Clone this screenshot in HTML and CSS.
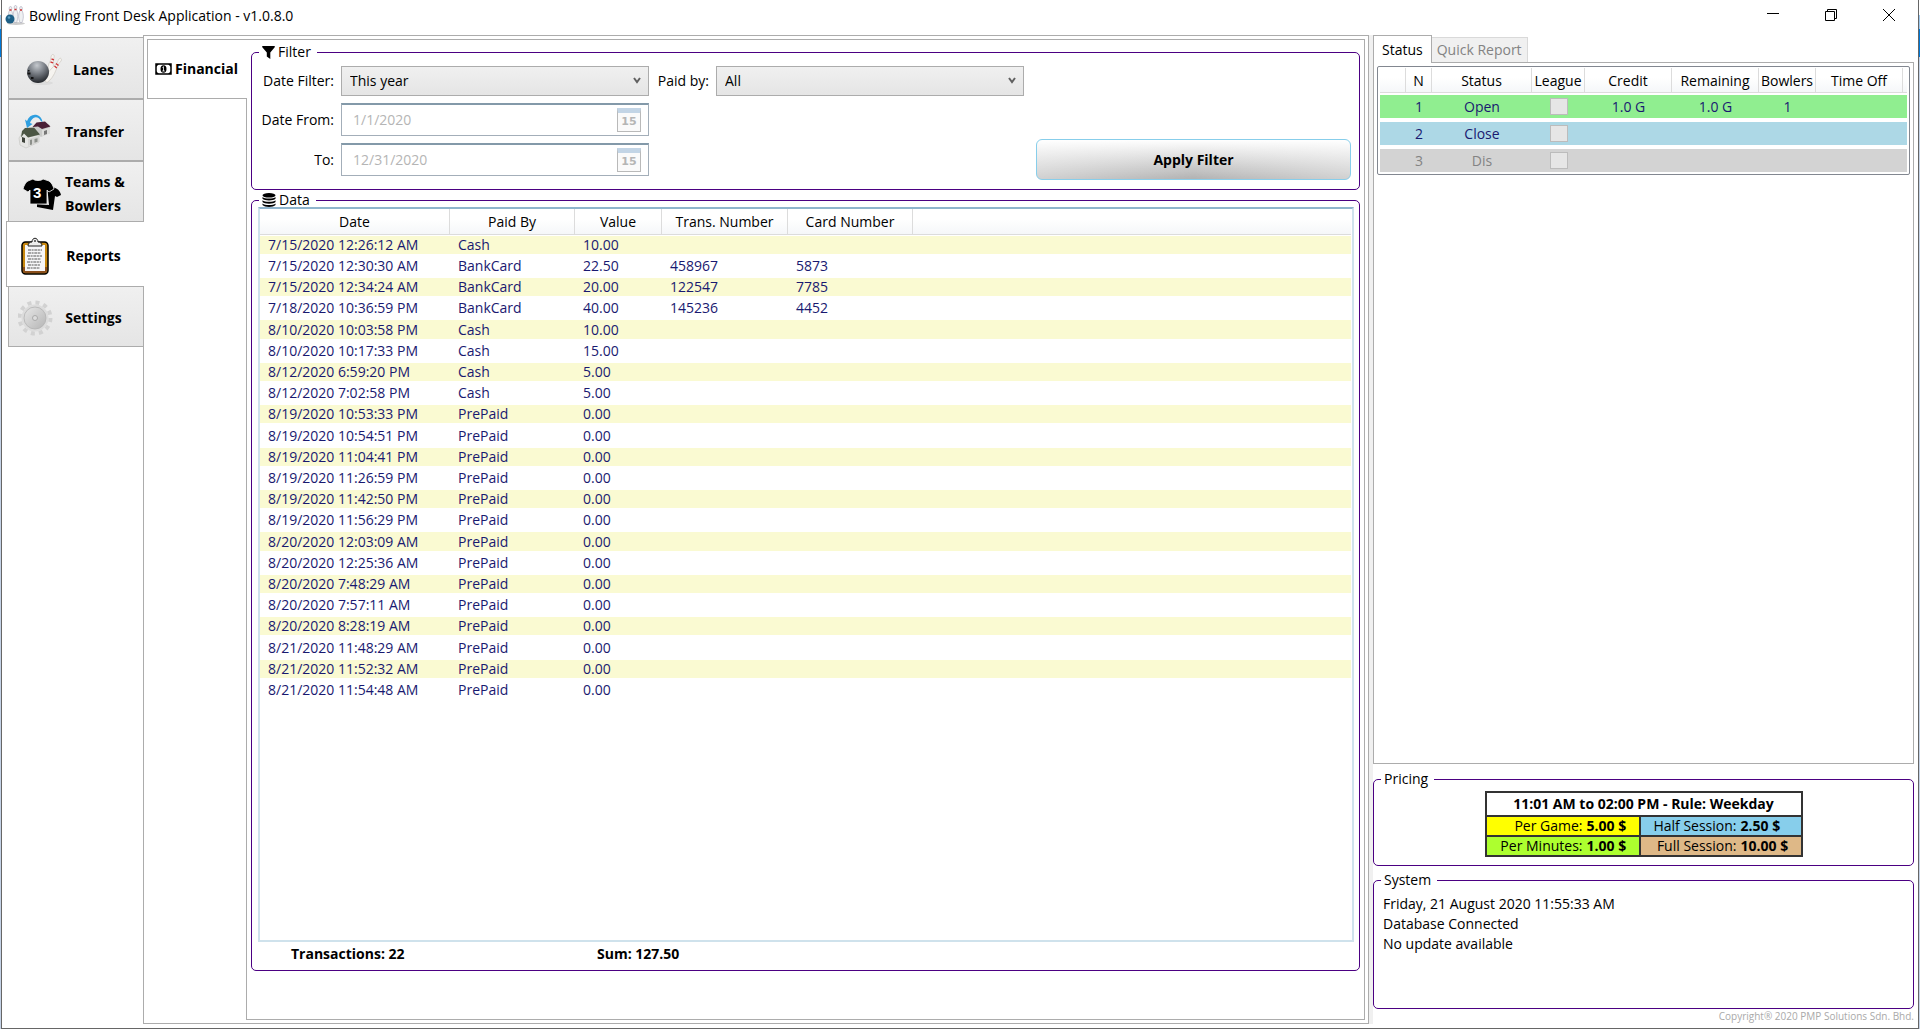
FILE: index.html
```
<!DOCTYPE html>
<html lang="en">
<head>
<meta charset="utf-8">
<title>Bowling Front Desk Application - v1.0.8.0</title>
<link rel="stylesheet" href="styles.css">
</head>

<body>
<div class="window">

  <!-- Title bar -->
  <header class="titlebar">
    <svg class="app-icon" width="20" height="20" viewBox="0 0 20 20">
      <ellipse cx="11" cy="18.500" rx="9" ry="1.500" fill="#ccc"/>
      <g fill="#eef0f2" stroke="#aab" stroke-width=".6">
        <path d="M5.500 1.500c1.500 0 1.600 2 1 4 2 4 1.500 9 0 12h-2c-1.500-3-2-8 0-12-.6-2-.5-4 1-4z"/>
        <path d="M10.500.5c1.500 0 1.600 2 1 4 2 4 1.500 10 0 13h-2c-1.500-3-2-9 0-13-.6-2-.5-4 1-4z"/>
        <path d="M16 1.500c1.500 0 1.600 2 1 4 2 4 1.500 9 0 12h-2c-1.500-3-2-8 0-12-.6-2-.5-4 1-4z"/>
      </g>
      <path d="M4.500 5h2M9.500 4.500h2M15 5h2" stroke="#c33" stroke-width="1.500"/>
      <circle cx="5" cy="14" r="4.500" fill="#1d5f86"/>
      <circle cx="4" cy="12.500" r="1.300" fill="#5a9fc4"/>
    </svg>
    <span class="app-title">Bowling Front Desk Application - v1.0.8.0</span>
    <button class="win-btn" aria-label="Minimize"><svg width="12" height="12" viewBox="0 0 12 12"><path d="M0 4.500h12"/></svg></button>
    <button class="win-btn" aria-label="Restore"><svg width="12" height="12" viewBox="0 0 12 12"><path d="M.5 2.500h9v9h-9zM2.500 2.500v-2h9v9h-2"/></svg></button>
    <button class="win-btn" aria-label="Close"><svg width="12" height="12" viewBox="0 0 12 12"><path d="M0 0l12 12M12 0L0 12"/></svg></button>
  </header>

  <div class="layout">

    <!-- Main navigation -->
    <nav class="sidebar">
      <button class="side-tab">
        <svg width="44" height="38" viewBox="0 0 44 38">
          <defs>
            <radialGradient id="ball" cx=".45" cy=".2" r=".8">
              <stop offset="0" stop-color="#c5c9ce"/>
              <stop offset=".45" stop-color="#7b8087"/>
              <stop offset="1" stop-color="#23262b"/>
            </radialGradient>
          </defs>
          <ellipse cx="24" cy="32" rx="11" ry="2" fill="#dcdcdc"/>
          <g fill="#f6f4f0" stroke="#c8c3bb" stroke-width=".6">
            <path d="M35 3.500c1.300.2 1.500 1.500 1 3-.6 2.500-.6 5-.6 9 0 5-1 9-3.400 11l-2-2c-1-4 0-9 1-12 1-2 1.800-3.500 2-6 .1-1.800.8-3.200 2-3z"/>
            <path d="M43 7.500c1 .8.500 2.300-.8 3.500-2 2-2.700 4-4.200 8-1.800 5-5 10-9 12.500l-2-1.500c1-5 3-9 7-13 2.500-2.500 4.500-3.500 5.500-6 .8-2.300 2.200-4.500 3.500-3.500z"/>
          </g>
          <path d="M33.500 8l2.500.8M32.500 11l2.700.8M38 12.500l2.500 2M36.500 15l2.300 2" stroke="#d0383a" stroke-width="1.400"/>
          <circle cx="20" cy="21" r="11" fill="url(#ball)"/>
          <path d="M9.500 21.500h3v2h-3zM13 26h2.500v2H13zM10 19h1.500v1.500H10z" fill="#111"/>
        </svg>
        <span>Lanes</span>
      </button>
      <button class="side-tab">
        <svg width="44" height="38" viewBox="0 0 44 38">
          <path d="M16 14l4-4 10 1 2 2v7l-9 4-5-3z" fill="#c9cac8"/>
          <path d="M14.500 14l4-4.500L27 8.500l5.500 5-8.500 2.500-4-2.500z" fill="#4a2036"/>
          <path d="M24 17l8-2.500v6L24 23z" fill="#dededc"/>
          <path d="M26 18l3-1v4l-3 1z" fill="#777"/>
          <path d="M1 25l4-6 5 5 11-2v7L8 35l-6-3z" fill="#e6e6e4" stroke="#c2c2c0" stroke-width=".6"/>
          <path d="M4 18l3-3 9-.5 6 7-12 3-4-4-3 4z" fill="#4c5644"/>
          <path d="M4 24l3 1v5l-3-1z" fill="#3f433b"/>
          <path d="M10 26l11-3v6l-11 4z" fill="#d4d4d2"/>
          <path d="M12 27l2-.6v5l-2 .7zM16.500 26l3-.8v3.500l-3 1z" fill="#8c8f8a"/>
          <path d="M7 6.500l2 1.500C11 3 15 .8 19 2c3 1 5 3.500 5.500 7L22.800 8C21.500 4.700 18 3 15.500 5c-2 1.500-3 3.200-3.500 5l2.500 1-5.500 4z" fill="#2f9fe0"/>
        </svg>
        <span>Transfer</span>
      </button>
      <button class="side-tab">
        <svg width="44" height="38" viewBox="0 0 44 38">
          <path d="M29 10l4 2c3 0 9 2 10 8l-4 2-2-1-2 14-16-3v-3l12 1z" fill="#000"/>
          <path d="M15 4c2 2 8 2 10 0l6 2c3 2 4 5 5 8l-5 3-2-2v14H12V15l-2 2-5-3c1-4 3-7 5-8z" fill="#000" stroke="#efefef" stroke-width=".8"/>
          <text class="shirt-number" x="15" y="23">3</text>
        </svg>
        <span class="wrap">Teams &amp; Bowlers</span>
      </button>
      <button class="side-tab active">
        <svg width="44" height="38" viewBox="0 0 44 38">
          <rect x="4" y="5" width="26" height="32" rx="3.500" fill="#c8880f" stroke="#000" stroke-width="1.500"/>
          <path d="M5 30h24v4q0 2-2 2H7q-2 0-2-2z" fill="#8a4e1b"/>
          <rect x="7" y="8" width="20" height="26" fill="#f6f6f8"/>
          <path d="M10 9c0-3 2-4 4-4 0-5 6-5 6 0 2 0 4 1 4 4z" fill="#eee" stroke="#222"/>
          <circle cx="17" cy="4" r="1" fill="#444"/>
          <path d="M10 13h14M10 16h13M9 19h15M10 22h13M9 25h14M10 28h12M9 31h13" stroke="#555" stroke-width="1" stroke-dasharray="3 .6 2 .7"/>
        </svg>
        <span>Reports</span>
      </button>
      <button class="side-tab">
        <svg width="44" height="38" viewBox="0 0 44 38">
          <defs>
            <linearGradient id="gear" x1="0" y1="0" x2="1" y2="1">
              <stop offset="0" stop-color="#e8e8e8"/>
              <stop offset="1" stop-color="#b4b4b4"/>
            </linearGradient>
          </defs>
          <circle cx="17" cy="19" r="15.500" fill="none" stroke="#d2d2d2" stroke-width="4" stroke-dasharray="4 4.115"/>
          <circle cx="17" cy="19" r="13.500" fill="#dcdcdc"/>
          <circle cx="17" cy="19" r="11" fill="url(#gear)" stroke="#b2b2b2" stroke-width=".8"/>
          <circle cx="17" cy="19" r="2.500" fill="#ddd" stroke="#aaa"/>
        </svg>
        <span>Settings</span>
      </button>
    </nav>

    <main class="main-panel">
      <div class="sub-nav">
        <button class="sub-tab">
          <svg width="17" height="12" viewBox="0 0 17 12">
            <path d="M1 1h15v10H1z" fill="#fff" stroke="#000" stroke-width="1.500"/>
            <path d="M1 1h3L1 4zM16 1h-3l3 3zM1 11h3L1 8zM16 11h-3l3-3z"/>
            <ellipse cx="8.500" cy="6" rx="3" ry="3.700"/>
            <path d="M7.500 4.500l1-.8v4.300M7.300 8h2.500" fill="none" stroke="#fff" stroke-width=".8"/>
          </svg>
          <span>Financial</span>
        </button>
      </div>

      <section class="report">
        <!-- Filter -->
        <fieldset class="group">
          <legend>
            <svg width="13" height="13" viewBox="0 0 13 13"><path d="M.5 0h12q.8.800 0 1.500L8.300 6.500V13L4.800 10.500v-4L.5 1.500Q-.3.800.5 0z"/></svg>
            Filter
          </legend>
          <div class="filter">
            <div class="fields">
              <label for="date-filter">Date Filter:</label>
              <div class="combo">
                <select id="date-filter"><option>This year</option></select>
                <svg width="8" height="7" viewBox="0 0 8 7"><path d="M1 1l3 4 3-4"/></svg>
              </div>
              <label for="paid-by">Paid by:</label>
              <div class="combo">
                <select id="paid-by"><option>All</option></select>
                <svg width="8" height="7" viewBox="0 0 8 7"><path d="M1 1l3 4 3-4"/></svg>
              </div>

              <label for="date-from">Date From:</label>
              <div class="date-box">
                <input id="date-from" type="text" value="1/1/2020" disabled>
                <button disabled aria-label="Pick start date"><span>15</span></button>
              </div>

              <label for="date-to">To:</label>
              <div class="date-box">
                <input id="date-to" type="text" value="12/31/2020" disabled>
                <button disabled aria-label="Pick end date"><span>15</span></button>
              </div>
            </div>
            <button class="apply">Apply Filter</button>
          </div>
        </fieldset>

        <!-- Data -->
        <fieldset class="group data-group">
          <legend>
            <svg width="14" height="14" viewBox="0 0 14 14">
              <ellipse cx="7" cy="2.300" rx="6.500" ry="2.300"/>
              <path d="M.5 4c2 2 11 2 13 0v1.800c-2 2.200-11 2.200-13 0zM.5 7.200c2 2 11 2 13 0V9c-2 2.200-11 2.200-13 0zM.5 10.400c2 2 11 2 13 0v1.600c-2 2.600-11 2.600-13 0z"/>
            </svg>
            Data
          </legend>
          <div class="list">
            <table class="payments">
              <colgroup><col class="c-date"><col class="c-paid"><col class="c-value"><col class="c-trans"><col class="c-card"><col></colgroup>
              <thead>
                <tr><th>Date</th><th>Paid By</th><th>Value</th><th>Trans. Number</th><th>Card Number</th><th></th></tr>
              </thead>
              <tbody>
                <tr><td>7/15/2020 12:26:12 AM</td><td>Cash</td><td>10.00</td><td></td><td></td><td></td></tr>
                <tr><td>7/15/2020 12:30:30 AM</td><td>BankCard</td><td>22.50</td><td>458967</td><td>5873</td><td></td></tr>
                <tr><td>7/15/2020 12:34:24 AM</td><td>BankCard</td><td>20.00</td><td>122547</td><td>7785</td><td></td></tr>
                <tr><td>7/18/2020 10:36:59 PM</td><td>BankCard</td><td>40.00</td><td>145236</td><td>4452</td><td></td></tr>
                <tr><td>8/10/2020 10:03:58 PM</td><td>Cash</td><td>10.00</td><td></td><td></td><td></td></tr>
                <tr><td>8/10/2020 10:17:33 PM</td><td>Cash</td><td>15.00</td><td></td><td></td><td></td></tr>
                <tr><td>8/12/2020 6:59:20 PM</td><td>Cash</td><td>5.00</td><td></td><td></td><td></td></tr>
                <tr><td>8/12/2020 7:02:58 PM</td><td>Cash</td><td>5.00</td><td></td><td></td><td></td></tr>
                <tr><td>8/19/2020 10:53:33 PM</td><td>PrePaid</td><td>0.00</td><td></td><td></td><td></td></tr>
                <tr><td>8/19/2020 10:54:51 PM</td><td>PrePaid</td><td>0.00</td><td></td><td></td><td></td></tr>
                <tr><td>8/19/2020 11:04:41 PM</td><td>PrePaid</td><td>0.00</td><td></td><td></td><td></td></tr>
                <tr><td>8/19/2020 11:26:59 PM</td><td>PrePaid</td><td>0.00</td><td></td><td></td><td></td></tr>
                <tr><td>8/19/2020 11:42:50 PM</td><td>PrePaid</td><td>0.00</td><td></td><td></td><td></td></tr>
                <tr><td>8/19/2020 11:56:29 PM</td><td>PrePaid</td><td>0.00</td><td></td><td></td><td></td></tr>
                <tr><td>8/20/2020 12:03:09 AM</td><td>PrePaid</td><td>0.00</td><td></td><td></td><td></td></tr>
                <tr><td>8/20/2020 12:25:36 AM</td><td>PrePaid</td><td>0.00</td><td></td><td></td><td></td></tr>
                <tr><td>8/20/2020 7:48:29 AM</td><td>PrePaid</td><td>0.00</td><td></td><td></td><td></td></tr>
                <tr><td>8/20/2020 7:57:11 AM</td><td>PrePaid</td><td>0.00</td><td></td><td></td><td></td></tr>
                <tr><td>8/20/2020 8:28:19 AM</td><td>PrePaid</td><td>0.00</td><td></td><td></td><td></td></tr>
                <tr><td>8/21/2020 11:48:29 AM</td><td>PrePaid</td><td>0.00</td><td></td><td></td><td></td></tr>
                <tr><td>8/21/2020 11:52:32 AM</td><td>PrePaid</td><td>0.00</td><td></td><td></td><td></td></tr>
                <tr><td>8/21/2020 11:54:48 AM</td><td>PrePaid</td><td>0.00</td><td></td><td></td><td></td></tr>
              </tbody>
            </table>
          </div>
          <div class="totals">
            <span>Transactions: 22</span>
            <span>Sum: 127.50</span>
          </div>
        </fieldset>
      </section>
    </main>

    <div class="splitter"></div>

    <!-- Lane status, pricing and system info -->
    <aside class="info">
      <div class="tabs">
        <button class="tab active">Status</button>
        <button class="tab" disabled>Quick Report</button>
      </div>
      <div class="tab-page">
        <table class="lanes">
          <colgroup><col class="l-mark"><col class="l-n"><col class="l-status"><col class="l-league"><col class="l-credit"><col class="l-remaining"><col class="l-bowlers"><col class="l-time"><col></colgroup>
          <thead>
            <tr><th></th><th>N</th><th>Status</th><th>League</th><th>Credit</th><th>Remaining</th><th>Bowlers</th><th>Time Off</th><th></th></tr>
          </thead>
          <tbody>
            <tr class="open"><td></td><td>1</td><td>Open</td><td><input type="checkbox" aria-label="League, lane 1" disabled></td><td>1.0 G</td><td>1.0 G</td><td>1</td><td></td><td></td></tr>
            <tr class="close"><td></td><td>2</td><td>Close</td><td><input type="checkbox" aria-label="League, lane 2" disabled></td><td></td><td></td><td></td><td></td><td></td></tr>
            <tr class="dis"><td></td><td>3</td><td>Dis</td><td><input type="checkbox" aria-label="League, lane 3" disabled></td><td></td><td></td><td></td><td></td><td></td></tr>
          </tbody>
        </table>
      </div>

      <fieldset class="group pricing-group">
        <legend>Pricing</legend>
        <table class="pricing">
          <colgroup><col class="p-label"><col class="p-value"><col class="p-label"><col></colgroup>
          <tr><th colspan="4">11:01 AM to 02:00 PM - Rule: Weekday</th></tr>
          <tr>
            <td class="label game">Per Game:</td><td class="game">5.00 $</td>
            <td class="label half">Half Session:</td><td class="half">2.50 $</td>
          </tr>
          <tr>
            <td class="label minutes">Per Minutes:</td><td class="minutes">1.00 $</td>
            <td class="label full">Full Session:</td><td class="full">10.00 $</td>
          </tr>
        </table>
      </fieldset>

      <fieldset class="group system-group">
        <legend>System</legend>
        <div class="system">
          <div>Friday, 21 August 2020 11:55:33 AM</div>
          <div>Database Connected</div>
          <div>No update available</div>
        </div>
      </fieldset>

      <footer class="copyright">Copyright® 2020 PMP Solutions Sdn. Bhd.</footer>
    </aside>

  </div>
</div>
</body>
</html>
```

FILE: styles.css
```
* {
  box-sizing: border-box;
}

body {
  margin: 0;
  height: 100vh;
  padding: 0 1px;
  background: linear-gradient(#fff 0, #fff 15px, #9cc8ee 15px, #9cc8ee 29px, #0078d7 29px, #0078d7 57px, #c4d2e6 57px);
  font-family: "Open Sans", "Noto Sans", sans-serif;
  font-size: 14px;
  line-height: 20px;
  color: #000;
}

button, input, select {
  font: inherit;
  color: inherit;
  margin: 0;
}

.window {
  display: flex;
  flex-direction: column;
  height: 100%;
  background: #fff;
  border: 1px solid #666;
  border-top: 0;
}

/* Title bar */
.titlebar {
  display: flex;
  height: 35px;
  padding-left: 3px;
}

.app-icon {
  margin: 5px 4px 0 0;
}

.app-title {
  flex: 1;
  line-height: 31px;
}

.win-btn {
  width: 58px;
  height: 30px;
  padding: 0;
  border: 0;
  background: none;
}

.win-btn svg {
  display: block;
  margin: 0 auto;
  fill: none;
  stroke: #000;
}

.layout {
  flex: 1;
  display: flex;
  min-height: 0;
  padding: 0 4px 4px 0;
}

/* Sidebar */
.sidebar {
  width: 141px;
  padding: 2px 0 0 6px;
}

.side-tab {
  display: flex;
  align-items: center;
  gap: 3px;
  width: 100%;
  height: 62px;
  padding: 3px 0 0 9px;
  border: 1px solid #acacac;
  border-right: 0;
  background: linear-gradient(#f0f0f0, #e5e5e5);
  font-weight: bold;
  line-height: 24px;
}

.side-tab span {
  min-width: 57px;
}

.side-tab .wrap {
  width: 64px;
  text-align: left;
}

.side-tab.active {
  position: relative;
  width: 138px;
  height: 66px;
  margin: -2px 0 -2px -2px;
  padding-left: 11px;
  background: #fff;
}

.shirt-number {
  font: bold 15px "Liberation Sans", sans-serif;
  fill: #fff;
}

/* Main panel */
.main-panel {
  flex: 1;
  display: flex;
  min-width: 0;
  border: 1px solid #acacac;
  padding: 3px;
}

.sub-nav {
  width: 99px;
}

.sub-tab {
  position: relative;
  display: flex;
  align-items: center;
  gap: 3px;
  width: 100px;
  height: 60px;
  padding: 0 0 0 7px;
  border: 1px solid #acacac;
  border-right: 0;
  background: #fff;
  font-weight: bold;
}

.report {
  flex: 1;
  display: flex;
  flex-direction: column;
  min-width: 0;
  gap: 2px;
  padding: 4px 4px 48px;
  border: 1px solid #acacac;
}

/* Group boxes */
.group {
  min-width: 0;
  margin: 0;
  padding: 0;
  border: 1px solid #4b0082;
  border-radius: 5px;
}

.group legend {
  display: flex;
  align-items: center;
  gap: 3px;
  height: 16px;
  margin-left: 7px;
  padding: 0 6px 0 3px;
  line-height: 16px;
}

.filter {
  display: flex;
  justify-content: space-between;
  align-items: flex-end;
  padding: 6px 8px 9px 0;
}

.fields {
  display: grid;
  grid-template-columns: 82px 308px 53px 308px;
  grid-template-rows: 30px 33px 33px;
  gap: 7px;
  padding-bottom: 4px;
  align-items: center;
  text-align: right;
}

.fields label {
  white-space: nowrap;
}

.date-box + label {
  grid-column: 1;
}

.combo {
  position: relative;
  height: 100%;
}

.combo select {
  appearance: none;
  width: 100%;
  height: 100%;
  padding: 0 8px;
  border: 1px solid #acacac;
  border-radius: 0;
  background: linear-gradient(#f0f0f0, #e5e5e5);
}

.combo svg {
  position: absolute;
  right: 8px;
  top: 11px;
  fill: none;
  stroke: #606060;
  stroke-width: 2;
  pointer-events: none;
}

.date-box {
  display: flex;
  align-items: center;
  height: 100%;
  padding-right: 7px;
  border: 1px solid #a3aeb9;
  border-top: 2px solid #8399a9;
}

.date-box input {
  flex: 1;
  min-width: 0;
  padding: 0 0 0 11px;
  border: 0;
  background: none;
  color: #b5b5b5;
}

.date-box button {
  width: 24px;
  height: 24px;
  padding: 0;
  border: 1px solid #b9b9b9;
  border-top: 5px solid #c3d5e6;
  background: #fafafa;
  color: #b5b5b5;
  font: bold 11px/18px "DejaVu Sans", sans-serif;
}

.apply {
  width: 315px;
  height: 41px;
  border: 1px solid #87ceeb;
  border-radius: 6px;
  background: linear-gradient(90deg, rgba(255, 255, 255, .4), transparent 50%, rgba(255, 255, 255, .4)), linear-gradient(#fff, #b2b2b2);
  font-weight: bold;
}

/* Data list */
.data-group {
  flex: 1;
  display: flex;
  flex-direction: column;
}

.list {
  flex: 1;
  margin: -1px 5px 0 6px;
  border: 2px solid #cfe2ec;
  border-top-color: #8fb4cd;
}

table {
  border-spacing: 0;
  table-layout: fixed;
}

th, td {
  padding: 0;
  overflow: hidden;
  white-space: nowrap;
}

thead th {
  font-weight: normal;
  background: linear-gradient(#fff 40%, #f5f7f9);
  border-right: 1px solid #dcdcdc;
  border-bottom: 1px solid #dcdcdc;
}

thead th:last-child {
  border-right: 0;
}

.payments {
  width: 100%;
  padding-right: 1px;
}

.c-date { width: 190px; }
.c-paid { width: 125px; }
.c-value { width: 87px; }
.c-trans { width: 126px; }
.c-card { width: 125px; }

.payments th {
  height: 26px;
}

.payments td {
  padding: 0 8px;
  border-top: 1px solid transparent;
  border-bottom: 2px solid transparent;
  background-clip: padding-box;
  color: #191970;
  line-height: 18px;
}

.payments tr:nth-child(5n) td {
  line-height: 19px;
}

.payments tr:nth-child(odd) td {
  background-color: #fafad2;
}

.totals {
  display: grid;
  grid-template-columns: 306px auto;
  padding: 2px 0 6px 39px;
  font-weight: bold;
}

.splitter {
  width: 4px;
  background: #f0f0f0;
}

/* Right column */
.info {
  display: flex;
  flex-direction: column;
  width: 541px;
}

.tabs {
  display: flex;
  align-items: flex-end;
}

.tab {
  height: 25px;
  padding: 0 5px;
  border: 1px solid #d9d9d9;
  border-bottom: 0;
  border-left: 0;
  background: #f0f0f0;
  color: #838383;
}

.tab.active {
  position: relative;
  height: 28px;
  margin-bottom: -1px;
  padding: 0 8px;
  border: 1px solid #acacac;
  border-bottom: 0;
  background: #fff;
  color: #000;
}

.tab-page {
  flex: 1;
  padding: 3px;
  border: 1px solid #acacac;
}

.lanes {
  width: 100%;
  padding: 1px 2px 0;
  border: 1px solid #828790;
  border-radius: 2px;
  text-align: center;
}

.l-mark, .l-n { width: 26px; }
.l-status { width: 100px; }
.l-league { width: 53px; }
.l-credit, .l-remaining, .l-time { width: 87px; }
.l-bowlers { width: 57px; }

.lanes th {
  height: 25px;
  padding-top: 2px;
}

.lanes td {
  height: 27px;
  border: 2px solid transparent;
  border-width: 2px 0;
  background-clip: padding-box;
  color: #191970;
}

.lanes .open td { background-color: #90ee90; }
.lanes .close td { background-color: #add8e6; }
.lanes .dis td {
  background-color: #d3d3d3;
  color: #838383;
}

.lanes input {
  appearance: none;
  display: block;
  width: 18px;
  height: 17px;
  margin: 0 auto;
  border: 1px solid #bcbcbc;
  background: #e6e6e6;
}

.pricing-group {
  height: 95px;
  margin-top: 7px;
}

.pricing {
  width: 318px;
  margin: 4px auto 0;
  border-collapse: collapse;
}

.p-label { width: 97px; }
.p-value { width: 57px; }

.pricing th {
  height: 24px;
  border: 2px solid #333;
}

.pricing td {
  height: 20px;
  padding-left: 4px;
  border: 2px solid #333;
  border-left: 0;
  font-weight: bold;
  line-height: 18px;
}

.pricing .label {
  padding: 0;
  border-left: 2px solid #333;
  border-right: 0;
  font-weight: normal;
  text-align: right;
}

.game { background: #ffff00; }
.half { background: #87ceeb; }
.minutes { background: #adff2f; }
.full { background: #deb887; }

.system-group {
  height: 137px;
  margin-top: 6px;
}

.system {
  padding: 6px 9px;
}

.copyright {
  font-size: 10px;
  line-height: 15px;
  color: #a9a9a9;
  text-align: right;
}
```
